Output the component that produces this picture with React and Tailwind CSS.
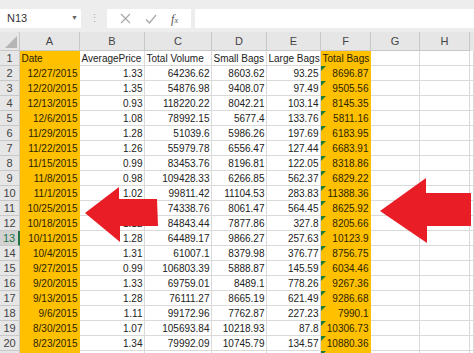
import React from 'react';

const widths = [20, 60, 65, 67, 55, 54, 50, 49, 50];
const letters = ['A', 'B', 'C', 'D', 'E', 'F', 'G', 'H', 'I'];

const rows = [
  ['12/27/2015', '1.33', '64236.62', '8603.62', '93.25', '8696.87'],
  ['12/20/2015', '1.35', '54876.98', '9408.07', '97.49', '9505.56'],
  ['12/13/2015', '0.93', '118220.22', '8042.21', '103.14', '8145.35'],
  ['12/6/2015', '1.08', '78992.15', '5677.4', '133.76', '5811.16'],
  ['11/29/2015', '1.28', '51039.6', '5986.26', '197.69', '6183.95'],
  ['11/22/2015', '1.26', '55979.78', '6556.47', '127.44', '6683.91'],
  ['11/15/2015', '0.99', '83453.76', '8196.81', '122.05', '8318.86'],
  ['11/8/2015', '0.98', '109428.33', '6266.85', '562.37', '6829.22'],
  ['11/1/2015', '1.02', '99811.42', '11104.53', '283.83', '11388.36'],
  ['10/25/2015', '1.07', '74338.76', '8061.47', '564.45', '8625.92'],
  ['10/18/2015', '1.12', '84843.44', '7877.86', '327.8', '8205.66'],
  ['10/11/2015', '1.28', '64489.17', '9866.27', '257.63', '10123.9'],
  ['10/4/2015', '1.31', '61007.1', '8379.98', '376.77', '8756.75'],
  ['9/27/2015', '0.99', '106803.39', '5888.87', '145.59', '6034.46'],
  ['9/20/2015', '1.33', '69759.01', '8489.1', '778.26', '9267.36'],
  ['9/13/2015', '1.28', '76111.27', '8665.19', '621.49', '9286.68'],
  ['9/6/2015', '1.11', '99172.96', '7762.87', '227.23', '7990.1'],
  ['8/30/2015', '1.07', '105693.84', '10218.93', '87.8', '10306.73'],
  ['8/23/2015', '1.34', '79992.09', '10745.79', '134.57', '10880.36'],
  ['', '', '', '', '', ''],
];

const header = ['Date', 'AveragePrice', 'Total Volume', 'Small Bags', 'Large Bags', 'Total Bags'];

function Cell({ w, orange, children, right, tri, flex }) {
  return (
    <div
      className={
        'relative h-full shrink-0 flex items-center overflow-hidden whitespace-nowrap border-b border-r px-[1.5px] ' +
        (orange ? 'bg-[#ffc000] border-[#ffc000] text-[#2b2400] ' : 'border-[#dadada] text-[#222] ') +
        (right ? 'justify-end ' : 'justify-start ') +
        (flex ? 'flex-1' : '')
      }
      style={flex ? undefined : { width: w }}
    >
      {tri && (
        <span className="absolute left-0 top-0 w-0 h-0 border-t-[5px] border-r-[5px] border-t-[#1e7b34] border-r-transparent" />
      )}
      {children}
    </div>
  );
}

export default function App() {
  return (
    <div className="relative w-[474px] h-[353px] overflow-hidden bg-white font-['Liberation_Sans',Arial,sans-serif] text-[10px]">
      {/* Formula bar */}
      <div className="h-[32px] bg-[#ededed] pt-[9px] flex items-start">
        <div className="w-[81px] h-[19px] bg-white flex items-center justify-between pl-[7px] pr-[3px] text-[11px] text-[#333]">
          <span>N13</span>
          <span className="text-[7px] text-[#666]">▼</span>
        </div>
        <div className="w-[26px] h-[19px] flex items-center justify-center text-[#aaa] text-[11px]">⋮</div>
        <div className="w-[84px] h-[19px] bg-white flex items-center justify-around px-[6px]">
          <svg width="11" height="11" viewBox="0 0 11 11" fill="none" stroke="#a6a6a6" strokeWidth="1.1">
            <path d="M1 1 L10 10 M10 1 L1 10" />
          </svg>
          <svg width="12" height="10" viewBox="0 0 12 10" fill="none" stroke="#a6a6a6" strokeWidth="1.2">
            <path d="M1 5.5 L4.5 9 L11 1" />
          </svg>
          <span className="font-['Liberation_Serif',serif] italic text-[12px] text-[#555]">f<span className="text-[8px]">x</span></span>
        </div>
        <div className="w-[4px]" />
        <div className="flex-1 h-[19px] bg-white" />
      </div>

      {/* Column headers */}
      <div className="flex h-[19px] bg-[#e6e6e6] text-[11px] text-[#444]">
        <div className="w-[20px] h-full shrink-0 border-r border-b border-[#c8c8c8] relative">
          <svg className="absolute right-[2px] bottom-[2px]" width="12" height="12" viewBox="0 0 12 12">
            <polygon points="12,0 12,12 0,12" fill="#b5b5b5" />
          </svg>
        </div>
        {widths.slice(1).map((w, i) => (
          <div
            key={i}
            className={'h-full flex items-center justify-center border-r border-b border-[#c8c8c8] ' + (i === 8 ? 'flex-1' : 'shrink-0')}
            style={i === 8 ? undefined : { width: w }}
          >
            {i < 8 ? letters[i] : ''}
          </div>
        ))}
      </div>

      {/* Rows */}
      {[header, ...rows].map((r, ri) => {
        const n = ri + 1;
        const sel = n === 13;
        const last = n === 21;
        return (
          <div key={ri} className="flex h-[15px]">
            <div
              className={
                'w-[20px] h-full shrink-0 flex items-center justify-center border-b text-[11px] ' +
                (sel
                  ? 'bg-[#d2d2d2] text-[#217346] border-r-2 border-r-[#217346] border-b-[#c8c8c8]'
                  : 'bg-[#e6e6e6] text-[#444] border-r border-[#c8c8c8]')
              }
            >
              {last ? '' : n}
            </div>
            <Cell w={60} orange right={ri > 0}>{r[0]}</Cell>
            <Cell w={65} right={ri > 0}>{r[1]}</Cell>
            <Cell w={67} right={ri > 0}>{r[2]}</Cell>
            <Cell w={55} right={ri > 0}>{r[3]}</Cell>
            <Cell w={54} right={ri > 0}>{r[4]}</Cell>
            <Cell w={50} orange right={ri > 0} tri={ri > 0}>{r[5]}</Cell>
            <Cell w={49} />
            <Cell w={50} />
            <Cell flex />
          </div>
        );
      })}

      {/* Red arrows drawn over the sheet */}
      <svg className="absolute left-0 top-0 pointer-events-none" width="474" height="353" viewBox="0 0 474 353">
        <polygon points="85,213 119,187 119,199 157,199 158,226 120,226 120,242" fill="#e81d25" />
        <polygon points="380,211 426,178 426,193 471,193 471,226 427,226 427,243" fill="#e81d25" />
      </svg>
    </div>
  );
}
